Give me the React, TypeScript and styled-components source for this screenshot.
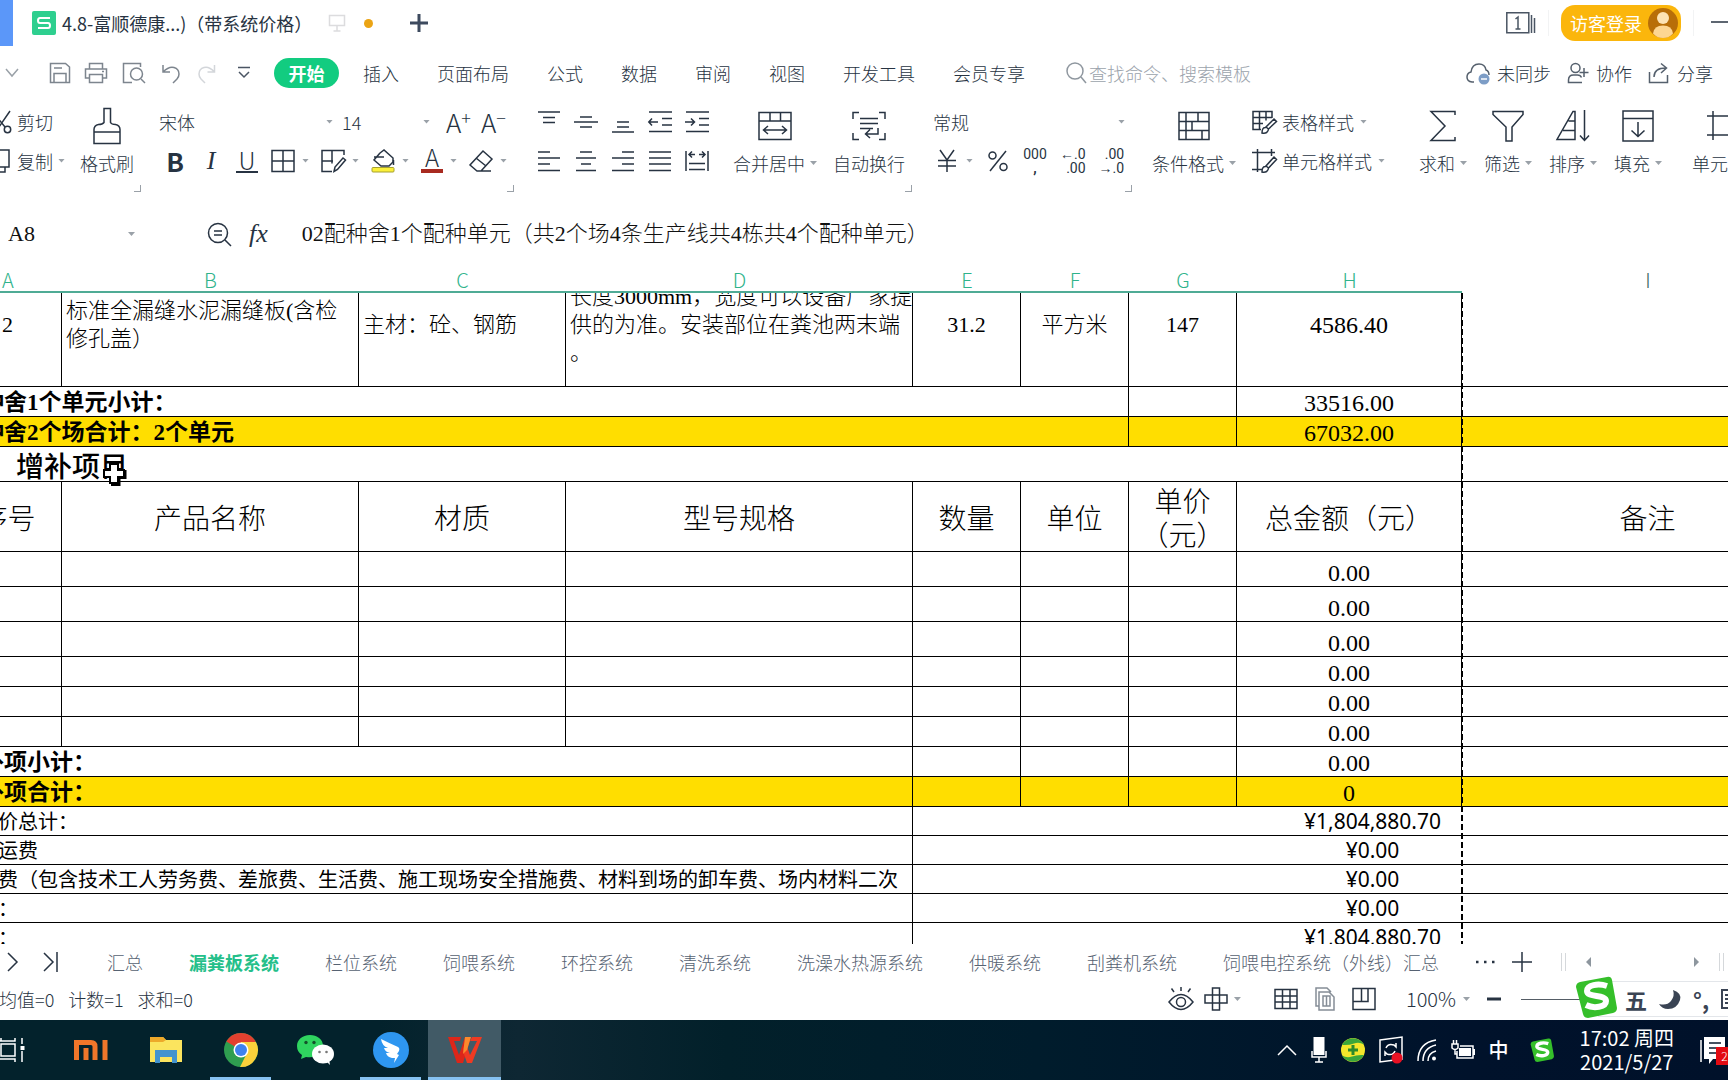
import React from "react";
import styled, { createGlobalStyle, css } from "styled-components";

const UI = `"Noto Sans CJK SC", "Noto Sans", sans-serif`;
const SONG = `"Liberation Serif", "Noto Sans CJK SC", serif`;
const INK = "#273342";
const COLUMNS = [108, 297, 207, 347, 108, 108, 108, 225];
const SHEET_SHIFT = 46;

const Global = createGlobalStyle`
  *, *::before, *::after { box-sizing: border-box; }
  html, body { margin: 0; background: #fff; }
  body { font: 300 18px/26px ${UI}; color: ${INK}; overflow: hidden; }
  button, input, select { font: inherit; color: inherit; background: none; border: 0; padding: 0; margin: 0; outline: 0; }
  button { display: flex; align-items: center; justify-content: center; white-space: nowrap; flex: none; }
  svg { display: block; flex: none; overflow: visible; }
`;

const Screen = styled.div`
  display: flex;
  flex-direction: column;
  height: 100vh;
  overflow: hidden;
`;

/* ---------- shared parts ---------- */

const Svg = styled.svg`
  fill: none;
  stroke: currentColor;
  stroke-width: 1.5;
`;

type IconProps = { w?: number; h?: number; color?: string; children: React.ReactNode };
const Icon = ({ w = 24, h = 24, color = INK, children }: IconProps) => (
  <Svg width={w} height={h} viewBox={`0 0 ${w} ${h}`} color={color} aria-hidden="true">
    {children}
  </Svg>
);

const Caret = styled.i`
  flex: none;
  width: 7px;
  height: 4px;
  background: #9aa1a8;
  clip-path: polygon(0 0, 100% 0, 50% 100%);
`;

/* ---------- title bar ---------- */

const TitleBar = styled.header`
  display: flex;
  align-items: center;
  flex: none;
  height: 46px;
`;
const HomeTab = styled.button`
  align-self: stretch;
  width: 13px;
  margin-right: 19px;
  background: #5b97f9;
`;
const DocTab = styled.button`
  gap: 6px;
  margin-right: 17px;
  font-weight: 400;
`;
const UnsavedDot = styled.i`
  width: 9px;
  height: 9px;
  margin: 0 37px 0 19px;
  border-radius: 50%;
  background: #eba414;
`;
const Spacer = styled.div`
  flex: 1;
`;
const Divider = styled.i`
  width: 1px;
  height: 26px;
  margin: 0 12px;
  background: #f2f3f4;
`;
const Login = styled.button`
  gap: 6px;
  height: 36px;
  padding: 0 3px 0 9px;
  border-radius: 14px;
  background: #fbb60c;
  color: #fff;
  font-weight: 400;
`;

/* ---------- menu bar ---------- */

const MenuBar = styled.nav`
  display: flex;
  align-items: center;
  flex: none;
  height: 54px;
  padding: 0 15px 0 5px;
`;
const Expand = styled.button`
  margin-right: 17px;
`;
const QuickBar = styled.div`
  display: flex;
  align-items: center;
  gap: 13px;
  margin-right: 18px;
`;
const StartTab = styled.button`
  width: 65px;
  height: 30px;
  margin-right: 24px;
  border-radius: 15px;
  background: #12cc80;
  color: #fff;
  font-weight: 700;
`;
const MenuItems = styled.div`
  display: flex;
  gap: 38px;
  margin-right: 41px;
`;
const Search = styled.label`
  display: flex;
  align-items: center;
  gap: 2px;
  color: #9ba3ac;
  input { width: 170px; }
  input::placeholder { color: #9ba3ac; opacity: 1; }
`;
const MenuActions = styled.div`
  display: flex;
  gap: 16px;
  button { gap: 7px; }
`;

/* ---------- ribbon ---------- */

const Ribbon = styled.section`
  display: flex;
  flex: none;
  height: 100px;
  padding: 2px 0 8px;
  margin-left: -10px;
`;
const Group = styled.div<{ $gap?: number; $launcher?: boolean; $inner?: number }>`
  position: relative;
  display: flex;
  flex: none;
  gap: ${(p) => p.$inner ?? 16}px;
  height: 90px;
  margin-left: ${(p) => p.$gap ?? 0}px;
  ${(p) =>
    p.$launcher &&
    css`
      &::after {
        content: "";
        position: absolute;
        right: -7px;
        bottom: 0;
        width: 7px;
        height: 7px;
        border: solid #9aa1a8;
        border-width: 0 1px 1px 0;
      }
    `}
`;
const Rows = styled.div`
  display: flex;
  flex-direction: column;
`;
const Row = styled.div<{ $gap: number; $pad?: number }>`
  display: flex;
  align-items: center;
  gap: ${(p) => p.$gap}px;
  height: 39px;
  padding-left: ${(p) => p.$pad ?? 0}px;
`;
const Tool = styled.button<{ $gap?: number; $size?: number }>`
  min-width: 24px;
  height: 30px;
  gap: ${(p) => p.$gap ?? 7}px;
  font-size: ${(p) => p.$size ?? 18}px;
`;
const BigTool = styled.button`
  flex-direction: column;
  justify-content: flex-start;
  height: 78px;
`;
const BigIcon = styled.span`
  display: flex;
  align-items: center;
  height: 48px;
`;
const BigLabel = styled.span`
  display: flex;
  align-items: center;
  gap: 5px;
`;
const Picker = styled.label<{ $width: number }>`
  display: flex;
  align-items: center;
  width: ${(p) => p.$width}px;
  select { flex: 1; appearance: none; }
`;
const Letter = styled.span<{ $kind?: "bold" | "italic" | "under" | "color" }>`
  display: flex;
  justify-content: center;
  font-size: 26px;
  line-height: 26px;
  ${(p) => p.$kind === "bold" && "font-weight: 700;"}
  ${(p) => p.$kind === "italic" && `font-family: "Liberation Serif", serif; font-style: italic;`}
  ${(p) => p.$kind === "under" && "width: 22px; height: 24px; line-height: 21px; border-bottom: 2px solid; font-size: 24px;"}
  ${(p) => p.$kind === "color" && "width: 22px; height: 25px; line-height: 18px; border-bottom: 4px solid #a82a20; font-size: 24px;"}
  sup { font-size: 18px; line-height: 16px; }
`;
const Digits = styled.span<{ $center?: boolean }>`
  display: flex;
  flex-direction: column;
  font: 400 14px/14px Roboto, sans-serif;
  text-align: ${(p) => (p.$center ? "center" : "right")};
`;

type BigProps = { label: string; caret?: boolean; children: React.ReactNode };
const Big = ({ label, caret, children }: BigProps) => (
  <BigTool>
    <BigIcon>{children}</BigIcon>
    <BigLabel>
      {label}
      {caret && <Caret />}
    </BigLabel>
  </BigTool>
);

/* ---------- formula bar ---------- */

const FormulaBar = styled.section`
  display: flex;
  align-items: center;
  flex: none;
  height: 54px;
  padding: 14px 0 0 8px;
  font: 300 22px/28px ${SONG};
  color: #111;
`;
const NameBox = styled.label`
  display: flex;
  align-items: center;
  width: 127px;
  margin-right: 72px;
  input { flex: 1; width: 100px; }
`;
const FormulaInput = styled.input`
  flex: 1;
  margin-left: 34px;
`;
const Fx = styled.button`
  margin-left: 17px;
  font: italic 400 26px/28px "Liberation Serif", serif;
  color: ${INK};
`;

/* ---------- sheet ---------- */

const HeadRow = styled.div`
  display: grid;
  grid-template-columns: ${COLUMNS.map((c) => `${c}px`).join(" ")} 1fr;
  flex: none;
  height: 39px;
  width: calc(100% + ${SHEET_SHIFT + 106}px);
  margin-left: -${SHEET_SHIFT}px;
`;
const HeadCell = styled.span<{ $picked: boolean }>`
  display: flex;
  align-items: flex-end;
  justify-content: center;
  font-size: 20px;
  line-height: 22px;
  color: ${(p) => (p.$picked ? "#2fb38b" : "#3c6a66")};
  border-bottom: 2px solid ${(p) => (p.$picked ? "#4fab95" : "transparent")};
`;
const Viewport = styled.main`
  position: relative;
  flex: 1;
  min-height: 0;
  overflow: hidden;
`;
const PageBreak = styled.i`
  position: absolute;
  top: 0;
  bottom: 0;
  left: ${COLUMNS.reduce((a, b) => a + b, 0) - SHEET_SHIFT - 1}px;
  width: 2px;
  background: repeating-linear-gradient(#000 0 6px, transparent 6px 9px);
`;
const CrossPointer = styled.div`
  position: absolute;
  left: 102px;
  top: 169px;
`;
const Table = styled.table`
  table-layout: fixed;
  width: calc(100% + ${SHEET_SHIFT + 106}px);
  margin: -29px 0 0 -${SHEET_SHIFT}px;
  border-collapse: separate;
  border-spacing: 0;
  color: #000;
`;
const Line = styled.tr<{ $h: number; $fill?: boolean }>`
  height: ${(p) => p.$h}px;
  ${(p) => p.$fill && "background: #ffde00;"}
`;
type CellProps = {
  $look?: "bold" | "section" | "title" | "amount" | "plain" | "money";
  $left?: boolean;
  $open?: boolean;
  $middle?: boolean;
  $nowrap?: boolean;
};
const Cell = styled.td<CellProps>`
  padding: ${(p) => (p.$left ? "0 0 0 4px" : "0 4px")};
  border: solid #000;
  border-width: ${(p) => (p.$open ? "0 0 1px 0" : "0 1px 1px 0")};
  text-align: ${(p) => (p.$left ? "left" : "center")};
  vertical-align: middle;
  font: 300 22px/28px ${SONG};
  ${(p) => p.$nowrap && "white-space: nowrap;"}
  ${(p) => p.$look === "bold" && css`font: 700 23px/26px ${SONG}; padding-top: 3px; white-space: nowrap;`}
  ${(p) => p.$look === "section" && css`font: 500 28px/32px ${UI}; padding: 2px 0 0 6px;`}
  ${(p) => p.$look === "title" && css`font: 300 28px/34px ${UI};`}
  ${(p) => p.$look === "amount" && css`font: 400 24px/26px ${SONG}; vertical-align: ${p.$middle ? "middle" : "bottom"};`}
  ${(p) => p.$look === "plain" && css`font: 400 20px/28px ${UI}; white-space: nowrap;`}
  ${(p) => p.$look === "money" && css`font: 400 21px/28px "Noto Sans", sans-serif; padding-left: 374px;`}
`;

const Blanks = ({ n }: { n: number }) => (
  <>
    {Array.from({ length: n }, (_, i) => (
      <Cell key={i} />
    ))}
  </>
);

/* ---------- sheet tabs and status ---------- */

const SheetBar = styled.nav`
  display: flex;
  align-items: center;
  flex: none;
  height: 36px;
  padding-left: 7px;
  color: #566272;
`;
const LastSheet = styled.button`
  margin-left: 24px;
`;
const SheetList = styled.div`
  display: flex;
  gap: 46px;
  margin: 0 36px 0 49px;
`;
const SheetTab = styled.button<{ $active?: boolean }>`
  ${(p) => p.$active && "color: #25bf8a; font-weight: 700;"}
`;
const AddSheet = styled.button`
  margin: 0 29px 0 17px;
`;
const Grip = styled.i`
  flex: none;
  width: 5px;
  height: 18px;
  border: solid #d5d8db;
  border-width: 0 1px;
`;
const Arrow = styled.i<{ $left?: boolean }>`
  width: 5px;
  height: 10px;
  background: #8d969e;
  clip-path: ${(p) => (p.$left ? "polygon(100% 0, 100% 100%, 0 50%)" : "polygon(0 0, 100% 50%, 0 100%)")};
`;
const HScroll = styled.div`
  display: flex;
  align-items: center;
  justify-content: space-between;
  flex: none;
  width: 113px;
  margin: 0 20px;
`;
const StatusBar = styled.footer`
  position: relative;
  display: flex;
  align-items: center;
  flex: none;
  height: 40px;
  padding: 0 119px 2px 0;
  margin-left: -19px;
`;
const Stats = styled.div`
  display: flex;
  gap: 14px;
`;
const ViewTools = styled.div<{ $gap: number; $after?: number }>`
  display: flex;
  align-items: center;
  gap: ${(p) => p.$gap}px;
  margin-left: ${(p) => p.$after ?? 0}px;
`;
const ZoomRange = styled.input`
  appearance: none;
  width: 88px;
  height: 20px;
  margin-left: 3px;
  &::-webkit-slider-runnable-track { height: 1px; background: #555d66; }
  &::-webkit-slider-thumb { appearance: none; width: 9px; height: 9px; margin-top: -4px; border-radius: 50%; background: #555d66; }
`;
const InputBar = styled.div`
  position: absolute;
  right: 0;
  top: 1px;
  display: flex;
  align-items: center;
  gap: 12px;
  width: 130px;
  height: 36px;
  padding-left: 27px;
  border: solid #e3e6ea;
  border-width: 1px 0;
  background: #fff;
  color: #3a4454;
  font-size: 22px;
  font-weight: 700;
`;
const InputLogo = styled.div`
  position: absolute;
  left: -23px;
  top: -6px;
`;

/* ---------- taskbar ---------- */

const TaskBar = styled.footer`
  display: flex;
  align-items: center;
  flex: none;
  height: 60px;
  background: linear-gradient(90deg, #03222c 0%, #03222c 22%, #0e2733 30%, #02202a 42%, #001c2c 60%, #00122b 85%, #00112a 100%);
  color: #fff;
`;
const TaskView = styled.button`
  width: 53px;
  height: 60px;
  justify-content: flex-start;
`;
const TaskApp = styled.button<{ $open?: boolean; $active?: boolean }>`
  width: 75px;
  height: 60px;
  ${(p) => p.$open && "background: linear-gradient(#86c2f2, #86c2f2) center bottom / 61px 3px no-repeat;"}
  ${(p) => p.$active && "width: 73px; background: linear-gradient(#86c2f2, #86c2f2) center bottom / 100% 3px no-repeat #415a66;"}
`;
const Tray = styled.div`
  display: flex;
  align-items: center;
  gap: 14px;
  font-size: 20px;
  font-weight: 500;
`;
const ImeMode = styled.span`
  margin-right: 7px;
`;
const Clock = styled.time`
  margin: 0 27px 0 26px;
  font: 400 20px/24px ${UI};
  text-align: center;
  white-space: nowrap;
`;
const Notice = styled.button`
  position: relative;
  width: 27px;
  height: 30px;
  justify-content: flex-start;
`;
const Badge = styled.span`
  position: absolute;
  right: 0;
  bottom: 0;
  width: 12px;
  height: 18px;
  padding-left: 5px;
  background: #e30b12;
  font-size: 12px;
  line-height: 18px;
`;

const SLogo = ({ size }: { size: number }) => (
  <svg width={size} height={size} viewBox="0 0 42 42" aria-hidden="true">
    <path d="M5 6 32 1q4-1 5 3l5 28q0 4-4 5l-25 5q-4 0-5-4L1 11q0-4 4-5z" fill="#35bf2a" />
    <path
      d="M32 10c-9-3-20-1-20 5 0 7 19 3 19 10 0 6-12 8-20 4"
      fill="none" stroke="#fff" strokeWidth="6"
    />
  </svg>
);

const amountRows = [35, 35, 35, 30, 30, 30];
const totals: [string, string][] = [
  ["设备价总计：", "¥1,804,880.70"],
  ["设备运费", "¥0.00"],
  ["安装费（包含技术工人劳务费、差旅费、生活费、施工现场安全措施费、材料到场的卸车费、场内材料二次", "¥0.00"],
  ["税金：", "¥0.00"],
  ["合计：", "¥1,804,880.70"],
];

const menus = ["插入", "页面布局", "公式", "数据", "审阅", "视图", "开发工具", "会员专享"];
const sheets = ["汇总", "漏粪板系统", "栏位系统", "饲喂系统", "环控系统", "清洗系统", "洗澡水热源系统", "供暖系统", "刮粪机系统", "饲喂电控系统（外线）汇总"];

export default function App() {
  return (
    <Screen>
      <Global />

      <TitleBar>
        <HomeTab aria-label="首页" />
        <DocTab>
          <svg width="24" height="24" viewBox="0 0 24 24" aria-hidden="true">
            <rect width="24" height="24" rx="2" fill="#2ecf8f" />
            <path d="M18 7H8q-2 0-2 2.500T8 12h8q2 0 2 2.500T16 17H6" fill="none" stroke="#fff" strokeWidth="2" />
          </svg>
          4.8-富顺德康...)（带系统价格）
        </DocTab>
        <Icon w={16} h={18} color="#dcdcde">
          <path d="M.5 1.500h15v10H.5zM8 11.500v5M4.500 17h7" />
        </Icon>
        <UnsavedDot />
        <button aria-label="新建标签">
          <Icon w={18} h={18} color="#3d4a5e">
            <path d="M9 0v18M0 9h18" strokeWidth="3" />
          </Icon>
        </button>
        <Spacer />
        <button aria-label="窗口列表">
          <Icon w={30} h={22} color="#4a5563">
            <path d="M.8.8h22v20h-22zM25.500 3v18M28.500 6v15M9.500 7l2.500-2v12M9.500 17h5" />
          </Icon>
        </button>
        <Divider />
        <Login>
          访客登录
          <svg width="30" height="30" viewBox="0 0 30 30" aria-hidden="true">
            <circle cx="15" cy="15" r="15" fill="#b86e08" />
            <circle cx="15" cy="10" r="6" fill="#fde3b4" />
            <path d="M5 25.500q1-8 10-8t10 8Q21 30 15 30T5 25.500z" fill="#fdd692" />
          </svg>
        </Login>
        <Divider />
        <button aria-label="最小化">
          <Icon w={22} h={22}>
            <path d="M5 10h17" />
          </Icon>
        </button>
      </TitleBar>

      <MenuBar>
        <Expand aria-label="展开">
          <Icon w={14} h={20} color="#9aa1a8"><path d="m1 6 6 7 6-7" /></Icon>
        </Expand>
        <QuickBar>
          <i />
          <button aria-label="保存">
            <Icon w={22} h={22} color="#7d858e">
              <path d="M1.500 1.500h15l4 3.500v15.500h-19zM5 20.500v-9h12v9M5 6h8" />
            </Icon>
          </button>
          <button aria-label="打印">
            <Icon w={24} h={22} color="#7d858e">
              <path d="M5.500 7V1.500h13V7M5.500 16h-4V7h21v9h-4M5.500 12.500h13v8h-13zM18 9.500h2" />
            </Icon>
          </button>
          <button aria-label="打印预览">
            <Icon w={26} h={22} color="#7d858e">
              <path d="M11 20.500H2.500v-19h17V5M20 17l4 4" />
              <circle cx="15.500" cy="12" r="6" />
            </Icon>
          </button>
          <button aria-label="撤销">
            <Icon w={22} h={22} color="#7d858e"><path d="M3 3v7h7M3 10Q9 4 14 5.500t5 6.500q0 3-2 5l-4 4" /></Icon>
          </button>
          <button aria-label="恢复">
            <Icon w={24} h={22} color="#d3d6da"><path d="M19.500 3v7h-7M19.500 10Q14 4 9 5.500T4 12q0 3 2 5l4 4" /></Icon>
          </button>
          <button aria-label="自定义">
            <Icon w={24} h={18} color="#4a5563"><path d="M6 3.500h12M7 8l5 5 5-5" /></Icon>
          </button>
        </QuickBar>
        <StartTab>开始</StartTab>
        <MenuItems>
          {menus.map((m) => (
            <button key={m}>{m}</button>
          ))}
        </MenuItems>
        <Search>
          <Icon w={21} h={24} color="#8f979f">
            <circle cx="9" cy="10" r="8" />
            <path d="m15 16 5 6" />
          </Icon>
          <input aria-label="查找命令、搜索模板" placeholder="查找命令、搜索模板" />
        </Search>
        <Spacer />
        <MenuActions>
          <button>
            <Icon w={24} h={22} color="#55606d">
              <path d="M8 20H6q-5-.5-5-5 0-4 4-5 1-8 8-8 6 0 7 6 3 1 3 5" />
              <circle cx="18" cy="17" r="5.500" fill="#7d9dc6" stroke="none" />
              <path d="M15 17h6" stroke="#fff" />
            </Icon>
            未同步
          </button>
          <button>
            <Icon w={22} h={22} color="#55606d">
              <circle cx="8.500" cy="6" r="4.500" />
              <path d="M15 20.500H1.500V18q0-5 5-5h4q3 0 4 2.500M17 6v9M12.500 10.500h9" />
            </Icon>
            协作
          </button>
          <button>
            <Icon w={22} h={22} color="#55606d">
              <path d="M1.500 10v10.500h18V13M6 15q0-9 12-9M13 1.500 18.500 6 13 11" />
            </Icon>
            分享
          </button>
        </MenuActions>
      </MenuBar>

      <Ribbon>
        <Group $inner={15} $launcher>
          <Rows>
            <Row $gap={0}>
              <Tool $gap={5}>
                <Icon w={22} h={24}>
                  <path d="M20 1 9 17M2 1l13 16" />
                  <circle cx="17.500" cy="19.500" r="3.200" />
                  <circle cx="6" cy="19.500" r="3.200" />
                </Icon>
                剪切
              </Tool>
            </Row>
            <Row $gap={0}>
              <Tool $gap={5}>
                <Icon w={22} h={24}>
                  <path d="M1 1h18v17H1zM15 18v5H5" />
                </Icon>
                复制
                <Caret />
              </Tool>
            </Row>
          </Rows>
          <Big label="格式刷">
            <Icon w={28} h={38}>
              <path d="M11 1.500h6.500v14q1 2 5 2 4.500 1 4.500 5V36.500H1V22.500q0-4 4.500-5 4 0 5.500-2zM1 25h26" />
            </Icon>
          </Big>
        </Group>

        <Group $gap={25} $launcher>
          <Rows>
            <Row $gap={0}>
              <Picker $width={174}>
                <select aria-label="字体"><option>宋体</option></select>
                <Caret />
              </Picker>
              <Row $gap={0} $pad={9}>
                <Picker $width={88}>
                  <select aria-label="字号"><option>14</option></select>
                  <Caret />
                </Picker>
              </Row>
              <Row $gap={10} $pad={16}>
                <Tool aria-label="增大字号"><Letter>A<sup>+</sup></Letter></Tool>
                <Tool aria-label="减小字号"><Letter>A<sup>−</sup></Letter></Tool>
              </Row>
            </Row>
            <Row $gap={12} $pad={4}>
              <Tool><Letter $kind="bold">B</Letter></Tool>
              <Tool><Letter $kind="italic">I</Letter></Tool>
              <Tool><Letter $kind="under">U</Letter></Tool>
              <Tool aria-label="边框">
                <Icon><path d="M1 1.500h22v21H1zM12 1.500v21M1 12h22" /></Icon>
                <Caret />
              </Tool>
              <Tool aria-label="绘图边框">
                <Icon>
                  <path d="M11 22.500H1v-21h22V6M1 12h11M11 1.500v13M13 22.500l1-4.500 8-9 2.500 2-8 9.500z" />
                </Icon>
                <Caret />
              </Tool>
              <Tool aria-label="填充颜色">
                <Icon>
                  <path d="m9 4-6 7 7 6h8l4-4V9L13 1 9 4M3 8h10" />
                  <path d="M22.500 11v5" />
                  <rect x="1" y="18.500" width="22" height="4.500" rx="1" fill="#fbf03a" stroke="#a6a12e" strokeWidth="1" />
                </Icon>
                <Caret />
              </Tool>
              <Tool aria-label="字体颜色">
                <Letter $kind="color">A</Letter>
                <Caret />
              </Tool>
              <Tool aria-label="清除">
                <Icon>
                  <path d="M14 2 23 10 12 22H8L1 16zM7 9l10 8M12 22h10" />
                </Icon>
                <Caret />
              </Tool>
            </Row>
          </Rows>
        </Group>

        <Group $gap={30}>
          <Rows>
            <Row $gap={13}>
              <Tool aria-label="顶端对齐"><Icon><path d="M1 2h22M6 7.500h12M6 12.500h12" /></Icon></Tool>
              <Tool aria-label="垂直居中"><Icon><path d="M6 7h12M0 12h24M6 17h12" /></Icon></Tool>
              <Tool aria-label="底端对齐"><Icon><path d="M6 12h12M6 17h12M1 22h22" /></Icon></Tool>
              <Tool aria-label="减少缩进"><Icon><path d="M1 2h23M14 8.500h10M14 15h10M1 21.500h23M1 12h9M4 8.500.8 12 4 15.500" /></Icon></Tool>
              <Tool aria-label="增加缩进"><Icon><path d="M1 2h23M14 8.500h10M14 15h10M1 21.500h23M0 12h9M6 8.500 9.500 12 6 15.500" /></Icon></Tool>
            </Row>
            <Row $gap={13}>
              <Tool aria-label="左对齐"><Icon><path d="M1 3h12M1 9h22M1 15h12M1 21.500h22" /></Icon></Tool>
              <Tool aria-label="居中"><Icon><path d="M6 3h12M2 9h20M7 15h10M2 21.500h20" /></Icon></Tool>
              <Tool aria-label="右对齐"><Icon><path d="M11 3h12M1 9h22M11 15h12M1 21.500h22" /></Icon></Tool>
              <Tool aria-label="两端对齐"><Icon><path d="M1 3h22M1 9h22M1 15h22M1 21.500h22" /></Icon></Tool>
              <Tool aria-label="分散对齐"><Icon><path d="M1 2v20M23 2v20M4 14.500h16M4 20.500h16M4 5.500h6M14 5.500h6M7 2.500 4 5.500l3 3M17 2.500l3 3-3 3" /></Icon></Tool>
            </Row>
          </Rows>
        </Group>

        <Group $gap={24} $launcher>
          <Big label="合并居中" caret>
            <Icon w={34} h={30}>
              <path d="M1 1.500h32v27H1zM1 10h32M12 1.500V10M22.500 1.500V10M6 19h22M10 15l-4.500 4 4.500 4M24 15l4.500 4-4.500 4" />
            </Icon>
          </Big>
          <Big label="自动换行">
            <Icon w={34} h={30}>
              <path d="M7 1.500H1V8M27 1.500h6V8M7 28.500H1V22M27 28.500h6V22M8 7.500h18M8 12.500h18M8 17.500h13M26 17v6H14M18 18.500 13.500 23l4.500 4" />
            </Icon>
          </Big>
        </Group>

        <Group $gap={28} $launcher>
          <Rows>
            <Row $gap={0}>
              <Picker $width={192}>
                <select aria-label="数字格式"><option>常规</option></select>
                <Caret />
              </Picker>
            </Row>
            <Row $gap={13} $pad={2}>
              <Tool aria-label="货币">
                <Icon><path d="m5 1 7 10 7-10M3 11.500h18M3 17h18M12 11v12" /></Icon>
                <Caret />
              </Tool>
              <Tool aria-label="百分比">
                <Icon>
                  <circle cx="6.500" cy="6.500" r="3.500" /><circle cx="17.500" cy="18" r="3.500" /><path d="M20 2 4 22" />
                </Icon>
              </Tool>
              <Tool aria-label="千位分隔"><Digits $center><span>000</span><b>,</b></Digits></Tool>
              <Tool aria-label="增加小数位"><Digits><span>←.0</span><span>.00</span></Digits></Tool>
              <Tool aria-label="减少小数位"><Digits><span>.00</span><span>→.0</span></Digits></Tool>
            </Row>
          </Rows>
        </Group>

        <Group $gap={27}>
          <Big label="条件格式" caret>
            <Icon w={32} h={30}>
              <path d="M1 1.500h30v27H1zM1 10.500h30M1 19.500h30M8 1.500v9M20 1.500v9M14 10.500v9M8 10.500v18M24 19.500v9" />
            </Icon>
          </Big>
          <Rows>
            <Row $gap={0}>
              <Tool $gap={6}>
                <Icon>
                  <path d="M9 19.500H1v-18h19V8M1 7.500h19M1 13.500h10M7.500 1.500v18M14 1.500v9" />
                  <path d="m22 9 2.500 2.500-8 7.500-2.500-2zM14 17.500q-4-.5-4 5.500 6 1 6.500-4" />
                </Icon>
                表格样式
                <Caret />
              </Tool>
            </Row>
            <Row $gap={0}>
              <Tool $gap={6}>
                <Icon>
                  <path d="M0 3.500h23M5.500 0v23M0 20.500h10M19.500 0v7" />
                  <path d="m22 8 2.500 2.500-8 8.500-2.500-2zM14 17.500q-4-.5-4 5.500 6 1 6.500-4" />
                </Icon>
                单元格样式
                <Caret />
              </Tool>
            </Row>
          </Rows>
        </Group>

        <Group $gap={34} $inner={17}>
          <Big label="求和" caret>
            <Icon w={28} h={32}><path d="M26 5V1.500H2L16 16 2 30.500h24V27" /></Icon>
          </Big>
          <Big label="筛选" caret>
            <Icon w={32} h={32}><path d="M1 1.500h30v3L20 17v14h-6V17L1 4.500z" /></Icon>
          </Big>
          <Big label="排序" caret>
            <Icon w={34} h={32}>
              <path d="M19 1.500v28H1L17 1.500zM12.500 11H19M7 20.500h12M28.500 0v30M24 25.500l4.500 5 4.500-5" />
            </Icon>
          </Big>
          <Big label="填充" caret>
            <Icon w={32} h={32}><path d="M1 1h30v30H1zM1 8.500h30M16 12v14.500M9.500 20.500l6.500 6 6.500-6" /></Icon>
          </Big>
        </Group>
        <Group $gap={30}>
          <Big label="单元格" caret>
            <Icon w={36} h={30}><path d="M0 5h36M0 24h36M6 0v29M30 0v29" /></Icon>
          </Big>
        </Group>
      </Ribbon>

      <FormulaBar>
        <NameBox>
          <input aria-label="名称框" defaultValue="A8" />
          <Caret />
        </NameBox>
        <button aria-label="缩小">
          <Icon w={25} h={25}>
            <circle cx="11" cy="11" r="9.500" />
            <path d="m18 18 6 6M7 9h8M7 13h8" />
          </Icon>
        </button>
        <Fx>fx</Fx>
        <FormulaInput aria-label="编辑栏" defaultValue="02配种舍1个配种单元（共2个场4条生产线共4栋共4个配种单元）" />
      </FormulaBar>

      <HeadRow>
        {"ABCDEFGHI".split("").map((c) => (
          <HeadCell key={c} $picked={c !== "I"}>{c}</HeadCell>
        ))}
      </HeadRow>

      <Viewport>
        <Table>
          <colgroup>
            {COLUMNS.map((w, i) => (
              <col key={i} width={w} />
            ))}
            <col />
          </colgroup>
          <tbody>
            <Line $h={123}>
              <Cell>2</Cell>
              <Cell $left>标准全漏缝水泥漏缝板(含检修孔盖）</Cell>
              <Cell $left>主材：砼、钢筋</Cell>
              <Cell $left $nowrap>
                长度3000mm，宽度可以设备厂家提
                <br />
                供的为准。安装部位在粪池两末端
                <br />。
              </Cell>
              <Cell>31.2</Cell>
              <Cell>平方米</Cell>
              <Cell>147</Cell>
              <Cell $look="amount" $middle>4586.40</Cell>
              <Cell />
            </Line>
            <Line $h={30}>
              <Cell $look="bold" $left colSpan={6}>配种舍1个单元小计：</Cell>
              <Cell />
              <Cell $look="amount">33516.00</Cell>
              <Cell />
            </Line>
            <Line $h={30} $fill>
              <Cell $look="bold" $left colSpan={6}>配种舍2个场合计：2个单元</Cell>
              <Cell />
              <Cell $look="amount">67032.00</Cell>
              <Cell />
            </Line>
            <Line $h={35}>
              <Cell $look="section" $left colSpan={8}>二、增补项目</Cell>
              <Cell />
            </Line>
            <Line $h={70}>
              {["序号", "产品名称", "材质", "型号规格", "数量", "单位", "单价（元）", "总金额（元）", "备注"].map((t) => (
                <Cell key={t} $look="title">{t}</Cell>
              ))}
            </Line>
            {amountRows.map((h, i) => (
              <Line key={i} $h={h}>
                <Blanks n={7} />
                <Cell $look="amount">0.00</Cell>
                <Cell />
              </Line>
            ))}
            <Line $h={30}>
              <Cell $look="bold" $left colSpan={4}>增补项小计：</Cell>
              <Blanks n={3} />
              <Cell $look="amount">0.00</Cell>
              <Cell />
            </Line>
            <Line $h={30} $fill>
              <Cell $look="bold" $left colSpan={4}>增补项合计：</Cell>
              <Blanks n={3} />
              <Cell $look="amount">0</Cell>
              <Cell />
            </Line>
            {totals.map(([name, sum]) => (
              <Line key={name} $h={29}>
                <Cell $look="plain" $left colSpan={4}>{name}</Cell>
                <Cell $look="money" $open colSpan={4}>{sum}</Cell>
                <Cell />
              </Line>
            ))}
          </tbody>
        </Table>
        <PageBreak />
        <CrossPointer>
          <svg width="24" height="24" viewBox="0 0 24 24" aria-hidden="true">
            <path d="M8 2h8v6h6v7h-6v6H8v-6H2V8h6z" fill="#fff" stroke="#000" strokeWidth="2" />
            <path d="M9 22.500h8v-7h6V8" fill="none" stroke="#000" strokeWidth="3" />
          </svg>
        </CrossPointer>
      </Viewport>

      <SheetBar>
        <button aria-label="下一张"><Icon w={12} h={20}><path d="m1 1 9 9-9 9" /></Icon></button>
        <LastSheet aria-label="最后一张"><Icon w={15} h={20}><path d="m1 1 9 9-9 9M14 0v20" /></Icon></LastSheet>
        <SheetList>
          {sheets.map((s, i) => (
            <SheetTab key={s} $active={i === 1}>{s}</SheetTab>
          ))}
        </SheetList>
        <button aria-label="更多工作表">
          <Icon w={20} h={4}><path d="M1 2h2.500M9 2h2.500M17 2h2.500" strokeWidth="2.500" /></Icon>
        </button>
        <AddSheet aria-label="新建工作表"><Icon w={20} h={20}><path d="M10 0v20M0 10h20" /></Icon></AddSheet>
        <Grip />
        <HScroll>
          <Arrow $left />
          <Arrow />
        </HScroll>
        <Grip />
      </SheetBar>

      <StatusBar>
        <Stats>
          <span>平均值=0</span>
          <span>计数=1</span>
          <span>求和=0</span>
        </Stats>
        <Spacer />
        <ViewTools $gap={11}>
          <Tool aria-label="护眼模式">
            <Icon>
              <path d="M0 15q12-15 24 0-12 15-24 0zM12 0v4M2.500 1.500 5 5M21.500 1.500 19 5" />
              <circle cx="12" cy="15" r="4.500" />
            </Icon>
          </Tool>
          <Tool $gap={6} aria-label="阅读模式">
            <Icon><path d="M8.500 1h7v22h-7zM1 8h22v8H1z" /></Icon>
            <Caret />
          </Tool>
        </ViewTools>
        <ViewTools $gap={15} $after={33}>
          <Tool aria-label="普通视图"><Icon><path d="M1 2.500h22v19H1zM1 9h22M1 15h22M8.500 2.500v19M16 2.500v19" /></Icon></Tool>
          <Tool aria-label="页面布局">
            <Icon color="#858d96"><path d="M6 5h10l5 5v13H6zM6 19H3V1h11l4 4M10 9h3.500v10H10zM13.500 9H17v10h-3.500" /></Icon>
          </Tool>
          <Tool aria-label="分页预览"><Icon><path d="M1 1.500h22v21H1zM1 14.500h15V1.500M9.500 1.500v13M16 8v6.500" /></Icon></Tool>
        </ViewTools>
        <ViewTools $gap={12} $after={30}>
          <Tool $size={20}>
            100%
            <Caret />
          </Tool>
          <Tool aria-label="缩小"><Icon w={16} h={4}><path d="M1 2h14" strokeWidth="3" /></Icon></Tool>
          <ZoomRange type="range" aria-label="显示比例" defaultValue={90} />
        </ViewTools>
        <InputBar>
          <InputLogo><SLogo size={42} /></InputLogo>
          <span>五</span>
          <Icon w={22} h={22}><path d="M14 2q9 3 7 10-3 9-12 9-6 0-9-5 8 2 12-3t2-11z" fill="#3a4454" stroke="none" /></Icon>
          <span>°,</span>
          <Icon w={22} h={20} color="#3a4454"><path d="M1 1h20v18H1zM4 6h14M4 10h14M4 14h14" strokeWidth="2" /></Icon>
        </InputBar>
      </StatusBar>

      <TaskBar>
        <TaskView aria-label="任务视图">
          <Icon w={26} h={24} color="#fff">
            <path d="M1 6h14v12H1zM0 3h1V0M15 0v3H1M15 24v-3H0M22 0v6M22 13v11" />
            <path d="M20.500 8h4v4h-4z" fill="#fff" stroke="none" />
          </Icon>
        </TaskView>
        <TaskApp aria-label="小米">
          <svg width="34" height="20" viewBox="0 0 34 20" aria-hidden="true">
            <path d="M2.500 20V2.500H17q4 0 4 4V20M12 8v12M31 0v20" fill="none" stroke="#f0762a" strokeWidth="5" />
          </svg>
        </TaskApp>
        <TaskApp aria-label="文件资源管理器">
          <svg width="32" height="28" viewBox="0 0 32 28" aria-hidden="true">
            <path d="M0 1h13l3 3h16v22H0z" fill="#fbe45e" />
            <path d="M0 1h13l3 3-3 2H0z" fill="#eda92a" />
            <path d="M5 14h22v13h-5v-6H10v6H5z" fill="#4393cf" />
          </svg>
        </TaskApp>
        <TaskApp $open aria-label="Chrome">
          <svg width="34" height="34" viewBox="0 0 34 34" aria-hidden="true">
            <circle cx="17" cy="17" r="17" fill="#2f9e50" />
            <path d="M17 17 2.300 8.500A17 17 0 0 1 31.700 8.500z" fill="#e2402f" />
            <path d="M17 17V9h14.900A17 17 0 0 1 16 34l6-12z" fill="#fbd13b" />
            <circle cx="17" cy="17" r="7.500" fill="#fff" />
            <circle cx="17" cy="17" r="6" fill="#3f82ee" />
          </svg>
        </TaskApp>
        <TaskApp aria-label="微信">
          <svg width="37" height="30" viewBox="0 0 37 30" aria-hidden="true">
            <path d="M13 0C5 0 0 5 0 11q0 6 5 9l-1 4 5-2q15 2 17-11C26 4 20 0 13 0z" fill="#2fd45f" />
            <ellipse cx="26" cy="19" rx="11" ry="9.500" fill="#fff" />
            <path d="m29 26 4 4-1-6z" fill="#fff" />
            <circle cx="9" cy="7.500" r="1.700" fill="#14532a" /><circle cx="17" cy="7.500" r="1.700" fill="#14532a" />
            <circle cx="22.500" cy="17" r="1.300" fill="#777" /><circle cx="29.500" cy="17" r="1.300" fill="#777" />
          </svg>
        </TaskApp>
        <TaskApp $open aria-label="钉钉">
          <svg width="36" height="36" viewBox="0 0 36 36" aria-hidden="true">
            <circle cx="18" cy="18" r="18" fill="#2e96f0" />
            <path d="M8 7q8 4 17 8 2 1 1 4l-2 3 2 1-5 8 1-5h-3q-5-1-6-5l4 0q-5-1-6-5l4 0Q9 14 8 7z" fill="#fff" />
          </svg>
        </TaskApp>
        <TaskApp $active aria-label="WPS">
          <svg width="34" height="26" viewBox="0 0 34 26" aria-hidden="true">
            <path d="M0 0h13l-1 4H6l5 14 6-18h6l-8 26H9z" fill="#dc2619" />
            <path d="M17 4 22 18 29 4h-7l2-4h10L24 26h-5l-4-12z" fill="#ef3a22" />
            <path d="M17 0h6l-4 13-4 4z" fill="#fb8a2c" />
          </svg>
        </TaskApp>
        <Spacer />
        <Tray>
          <Icon w={20} h={12} color="#fff"><path d="m1 11 9-9 9 9" /></Icon>
          <Icon w={16} h={26} color="#fff">
            <path d="M2.500 0h11v18h-11z" fill="#fff" stroke="none" /><path d="M1 14v6h14v-6M8 20v5M4 25h8" />
          </Icon>
          <svg width="24" height="24" viewBox="0 0 24 24" aria-hidden="true">
            <circle cx="12" cy="12" r="12" fill="#f3e62b" />
            <path d="M1 7Q6-1 14 .5q6 1 9 6-5-3-10-1T1 7zM23 17q-5 8-13 6.500-6-1-9-6 5 3 10 1t12-1.500z" fill="#3aa63a" />
            <path d="M12 7v10M7 12h10" stroke="#2b8a2b" strokeWidth="3" />
          </svg>
          <Icon w={24} h={26} color="#fff">
            <path d="M1 3 23 0v22L1 25z" /><path d="M7 11q2-5 8-3l2 2V6M16 14q-2 5-8 3l-2-2v4" />
            <circle cx="18" cy="21" r="5.500" fill="#e81123" stroke="none" />
          </Icon>
          <Icon w={20} h={22} color="#fff">
            <path d="M1 22Q1 4 19 1M6 22Q6 9 19 6M11 22q0-8 8-10" /><circle cx="17" cy="19.500" r="2" fill="#fff" stroke="none" />
          </Icon>
          <Icon w={24} h={20} color="#fff">
            <path d="M9 6h13v12H6v-7" /><path d="M8 8h12v8H8zM22 9h2v6h-2z" fill="#fff" stroke="none" /><path d="M1 4h6v4q-3 3-6 0zM2.500 0v4M5.500 0v4M4 9v5h2" />
          </Icon>
          <ImeMode>中</ImeMode>
          <SLogo size={24} />
        </Tray>
        <Clock>17:02 周四<br />2021/5/27</Clock>
        <Notice aria-label="通知">
          <Icon w={26} h={28} color="#fff">
            <path d="M3 1h21v22H12l-4 5v-5H3z" fill="#fff" stroke="none" /><path d="M0 4v22" />
            <path d="M8 7h12M8 12h12M8 17h8" stroke="#0a1a2e" />
          </Icon>
          <Badge>2</Badge>
        </Notice>
      </TaskBar>
    </Screen>
  );
}
